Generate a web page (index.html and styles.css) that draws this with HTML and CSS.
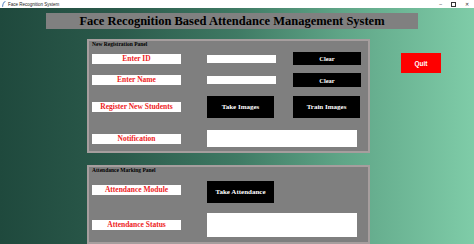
FILE: index.html
```html
<!DOCTYPE html>
<html lang="en">
<head>
  <meta charset="UTF-8" />
  <title>Face Recognition System</title>
  <link rel="stylesheet" href="styles.css">
</head>
<body>
  <div class="titlebar">
    <svg class="feather" width="4" height="6" viewBox="0 0 4 6"><path d="M3.5 0.3 C1.5 1 0.8 3 0.6 5.8" stroke="#3b6fb6" stroke-width="0.9" fill="none"/></svg>
    <span class="app-name">Face Recognition System</span>
    <div class="controls">
      <span class="ctl">&#8211;</span>
      <span class="ctl box"></span>
      <span class="ctl">&#10005;</span>
    </div>
  </div>

  <div class="app">
    <div class="banner">Face Recognition Based Attendance Management System</div>

    <div class="layout">
      <div class="panels">
        <div class="panel reg">
          <div class="legend">New Registration Panel</div>
          <div class="row r1">
            <div class="label">Enter ID</div>
            <div class="entry"></div>
            <button class="btn clear">Clear</button>
          </div>
          <div class="row r2">
            <div class="label">Enter Name</div>
            <div class="entry"></div>
            <button class="btn clear">Clear</button>
          </div>
          <div class="row r3">
            <div class="label">Register New Students</div>
            <button class="btn big">Take Images</button>
            <button class="btn big train">Train Images</button>
          </div>
          <div class="row r4">
            <div class="label">Notification</div>
            <div class="entry wide"></div>
          </div>
        </div>

        <div class="panel att">
          <div class="legend">Attendance Marking Panel</div>
          <div class="row ra">
            <div class="label">Attendance Module</div>
            <button class="btn big">Take Attendance</button>
          </div>
          <div class="row rb">
            <div class="label">Attendance Status</div>
            <div class="entry status"></div>
          </div>
        </div>
      </div>

      <button class="quit">Quit</button>
    </div>
  </div>
</body>
</html>
```

FILE: styles.css
```css
html, body {
  margin: 0;
  padding: 0;
}
body {
  width: 474px;
  height: 244px;
  overflow: hidden;
  font-family: "Liberation Serif", "Times New Roman", serif;
}
.titlebar {
  height: 8px;
  background-color: #fff;
  display: flex;
  align-items: center;
  padding-left: 2px;
  font-family: "Liberation Sans", Arial, sans-serif;
  font-size: 4.5px;
  color: #222;
}
.feather {
  margin-right: 2px;
}
.controls {
  margin-left: auto;
  display: flex;
  align-items: center;
  gap: 9px;
  margin-right: 5px;
  font-size: 5px;
  color: #333;
}
.ctl.box {
  width: 3px;
  height: 3px;
  border: 0.7px solid #333;
}
.app {
  height: 236px;
  box-sizing: border-box;
  padding-top: 5px;
  background: linear-gradient(90deg, #1f493d 0%, #2b5a4b 25%, #3f7a64 50%, #5fa587 72%, #7fcca8 100%);
}
.banner {
  margin-left: 46px;
  width: 372px;
  height: 16px;
  line-height: 17px;
  background-color: #808080;
  text-align: center;
  font-weight: bold;
  font-size: 12.5px;
  color: #000;
}
.layout {
  display: flex;
  align-items: flex-start;
  margin-top: 10px;
  padding-left: 87px;
}
.panels {
  width: 283px;
  display: flex;
  flex-direction: column;
  gap: 12px;
}
.panel {
  box-sizing: border-box;
  border: 2px solid #a69e9e;
  background-color: #7f7f7f;
  padding-left: 3px;
}
.panel.reg {
  height: 114px;
}
.panel.att {
  height: 79px;
}
.legend {
  font-weight: bold;
  font-size: 5.5px;
  line-height: 6px;
  color: #000;
}
.row {
  display: flex;
  align-items: center;
}
.r1 { margin-top: 5px; height: 13px; }
.r2 { margin-top: 8px; height: 14px; }
.r3 { margin-top: 9px; height: 22px; }
.r4 { margin-top: 12px; height: 17px; }
.ra { margin-top: 8px; height: 22px; align-items: flex-start; }
.rb { margin-top: 10px; height: 24px; }
.ra .label { margin-top: 4px; }
.label {
  width: 89px;
  height: 10px;
  line-height: 10.5px;
  background-color: #fff;
  text-align: center;
  color: #ee1c25;
  font-weight: bold;
  font-size: 7.5px;
}
.entry {
  width: 69px;
  height: 8px;
  margin-left: 26px;
  background-color: #fff;
}
.entry.wide {
  width: 150px;
  height: 17px;
}
.entry.status {
  width: 150px;
  height: 24px;
}
.btn {
  margin: 0;
  padding: 0;
  border: none;
  background-color: #000;
  color: #fff;
  font-family: "Liberation Serif", "Times New Roman", serif;
  font-weight: bold;
  font-size: 6.5px;
}
.btn.clear {
  width: 68px;
  height: 13px;
  margin-left: 17px;
}
.r2 .btn.clear {
  height: 14px;
}
.btn.big {
  width: 67px;
  height: 22px;
  margin-left: 26px;
  font-size: 7px;
}
.btn.big.train {
  margin-left: 19px;
}
.quit {
  margin-left: 31px;
  margin-top: 14px;
  width: 40px;
  height: 20px;
  padding: 0;
  border: none;
  background-color: #fe0000;
  color: #fff;
  font-family: "Liberation Sans", Arial, sans-serif;
  font-weight: bold;
  font-size: 6.5px;
}
```
